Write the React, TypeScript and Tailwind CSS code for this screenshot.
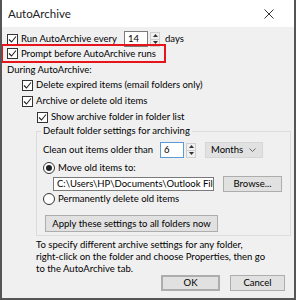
import React from "react";

const font = { fontFamily: 'Lato, "Open Sans", sans-serif' };

function Check() {
  return (
    <span className="w-[11px] h-[11px] border border-[#333] bg-white flex items-center justify-center shrink-0">
      <svg width="9" height="9" viewBox="0 0 9 9">
        <path d="M1 4.5 L3.5 7 L8 1.5" fill="none" stroke="#222" strokeWidth="1.1" />
      </svg>
    </span>
  );
}

function Radio({ on }: { on?: boolean }) {
  return (
    <span className="w-[12px] h-[12px] rounded-full border border-[#333] bg-white flex items-center justify-center shrink-0">
      {on && <span className="w-[6px] h-[6px] rounded-full bg-[#222]" />}
    </span>
  );
}

function Spinner() {
  return (
    <span className="w-[10px] h-[15px] flex flex-col border border-[#cfcfcf] bg-[#f0f0f0] shrink-0">
      <span className="flex-1 flex items-center justify-center border-b border-[#cfcfcf]">
        <svg width="5" height="3" viewBox="0 0 5 3"><path d="M0 3 L2.5 0 L5 3Z" fill="#333" /></svg>
      </span>
      <span className="flex-1 flex items-center justify-center">
        <svg width="5" height="3" viewBox="0 0 5 3"><path d="M0 0 L2.5 3 L5 0Z" fill="#333" /></svg>
      </span>
    </span>
  );
}

function Btn({ children, className = "" }: { children: React.ReactNode; className?: string }) {
  return (
    <div className={"bg-[#e1e1e1] border border-[#adadad] flex items-center justify-center shrink-0 " + className}>
      {children}
    </div>
  );
}

export default function App() {
  return (
    <div className="w-[296px] h-[300px] flex flex-col border-l-2 border-r-2 border-b-2 border-[#555] text-[9.5px] text-black leading-none whitespace-nowrap overflow-hidden" style={font}>
      {/* TITLE BAR */}
      <div className="h-[27px] bg-white flex items-center justify-between pl-[6px] pr-[20px] shrink-0">
        <span className="text-[11.5px] text-[#222]">AutoArchive</span>
        <svg width="10" height="10" viewBox="0 0 10 10">
          <path d="M0.5 0.5 L9.5 9.5 M9.5 0.5 L0.5 9.5" stroke="#333" strokeWidth="1" />
        </svg>
      </div>

      <div className="flex-1 bg-[#f0f0f0] flex flex-col pt-[4px]">
        <div className="h-[16px] shrink-0 flex items-center pl-[5px]">
          <Check />
          <span className="ml-[3px] w-[100px]">Run AutoArchive every</span>
          <div className="ml-[3px] w-[24px] h-[16px] bg-white border border-[#7a7a7a] flex items-center pl-[3px]">14</div>
          <span className="ml-[2px]"><Spinner /></span>
          <span className="ml-[5px]">days</span>
        </div>

        <div className="-mt-[3px] ml-[-1px] w-[165px] h-[19px] shrink-0 border-2 border-[#e8141c] flex items-center pl-[4px]">
          <Check />
          <span className="ml-[3px]">Prompt before AutoArchive runs</span>
        </div>

        <div className="h-[14px] shrink-0 flex items-center pl-[5px]">During AutoArchive:</div>

        <div className="h-[16px] shrink-0 flex items-center pl-[20px]">
          <Check />
          <span className="ml-[3px]">Delete expired items (email folders only)</span>
        </div>
        <div className="h-[16px] shrink-0 flex items-center pl-[20px]">
          <Check />
          <span className="ml-[3px]">Archive or delete old items</span>
        </div>
        <div className="h-[16px] shrink-0 flex items-center pl-[35px]">
          <Check />
          <span className="ml-[3px]">Show archive folder in folder list</span>
        </div>

        {/* GROUP BOX */}
        <div className="ml-[34px] mr-[3px] mt-[6px] h-[105px] shrink-0 border border-[#dcdcdc] relative flex flex-col pl-[6px]">
          <span className="absolute -top-[6px] left-[4px] px-[2px] bg-[#f0f0f0]">Default folder settings for archiving</span>
          <div className="mt-[10px] h-[16px] flex items-center">
            <span className="w-[114px]">Clean out items older than</span>
            <div className="ml-[3px] w-[24px] h-[16px] bg-white border border-[#5b9bd5] flex items-center pl-[3px]">6</div>
            <span className="ml-[2px]"><Spinner /></span>
            <div className="ml-[9px] w-[58px] h-[16px] bg-[#e1e1e1] border border-[#d6d6d6] flex items-center justify-between pl-[5px] pr-[6px]">
              <span>Months</span>
              <svg width="7" height="4" viewBox="0 0 7 4"><path d="M0.5 0.5 L3.5 3.5 L6.5 0.5" fill="none" stroke="#666" /></svg>
            </div>
          </div>
          <div className="mt-[2px] h-[16px] flex items-center">
            <Radio on />
            <span className="ml-[3px]">Move old items to:</span>
          </div>
          <div className="h-[16px] flex items-center">
            <div className="ml-[10px] w-[161px] h-[14px] bg-white border border-[#7a7a7a] flex items-center pl-[3px] overflow-hidden">
              <span className="overflow-hidden">C:\Users\HP\Documents\Outlook Files</span>
            </div>
            <Btn className="ml-[9px] w-[59px] h-[16px]">Browse...</Btn>
          </div>
          <div className="h-[14px] flex items-center">
            <Radio />
            <span className="ml-[3px]">Permanently delete old items</span>
          </div>
          <Btn className="mt-[9px] w-[173px] h-[17px] ml-[2px]">Apply these settings to all folders now</Btn>
        </div>

        <div className="pl-[34px] mt-[3px] leading-[12px] shrink-0">
          <div>To specify different archive settings for any folder,</div>
          <div>right-click on the folder and choose Properties, then go</div>
          <div>to the AutoArchive tab.</div>
        </div>

        <div className="flex pl-[159px] gap-[10px] shrink-0">
          <Btn className="w-[59px] h-[16px] border-[#0078d7] border-2">OK</Btn>
          <Btn className="w-[55px] h-[16px]">Cancel</Btn>
        </div>
      </div>
    </div>
  );
}
